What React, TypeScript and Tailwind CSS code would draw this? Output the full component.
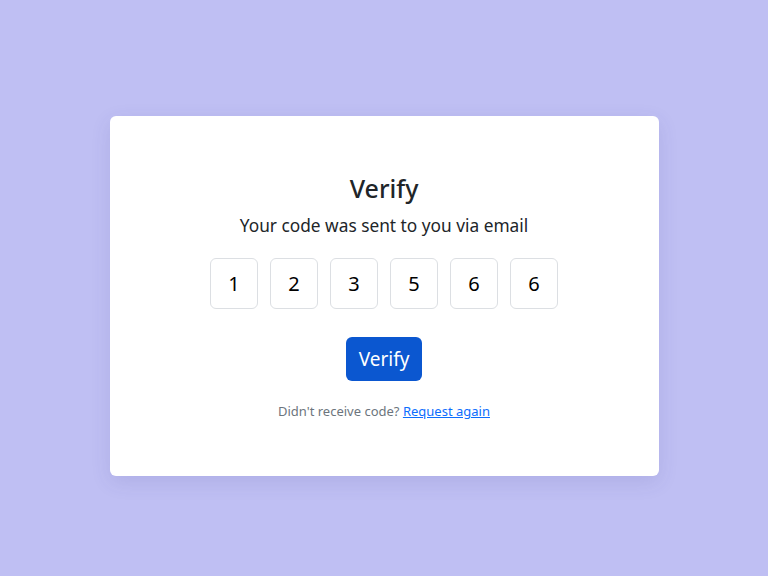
export default function App() {
  const digits = ["1", "2", "3", "5", "6", "6"];
  return (
    <div className="min-h-[576px] w-full bg-[#bfbff3] pt-[116px] font-['Noto_Sans',sans-serif]">
      <div className="mx-auto flex h-[360px] w-[549px] flex-col items-center rounded-md bg-white pt-[52px] shadow-[0_6px_20px_rgba(60,60,140,0.12)]">
        <h3 className="text-[25px] font-medium leading-[40px] text-[#212529]">Verify</h3>
        <p className="mt-[1px] text-[17.3px] leading-[34px] text-[#212529]">Your code was sent to you via email</p>
        <div className="mt-[15px] flex gap-3">
          {digits.map((d, i) => (
            <input
              key={i}
              readOnly
              value={d}
              className="h-[51px] w-[48px] rounded-md border border-[#dcdfe3] text-center text-[20px] text-black outline-none"
            />
          ))}
        </div>
        <button className="mt-[28px] h-[44px] w-[76px] rounded-md bg-[#0b57d0] text-[19px] text-white">Verify</button>
        <p className="mt-[21px] text-[13px] text-[#6c757d]">
          Didn't receive code?{" "}
          <a href="#" className="text-[#0d6efd] underline">Request again</a>
        </p>
      </div>
    </div>
  );
}
